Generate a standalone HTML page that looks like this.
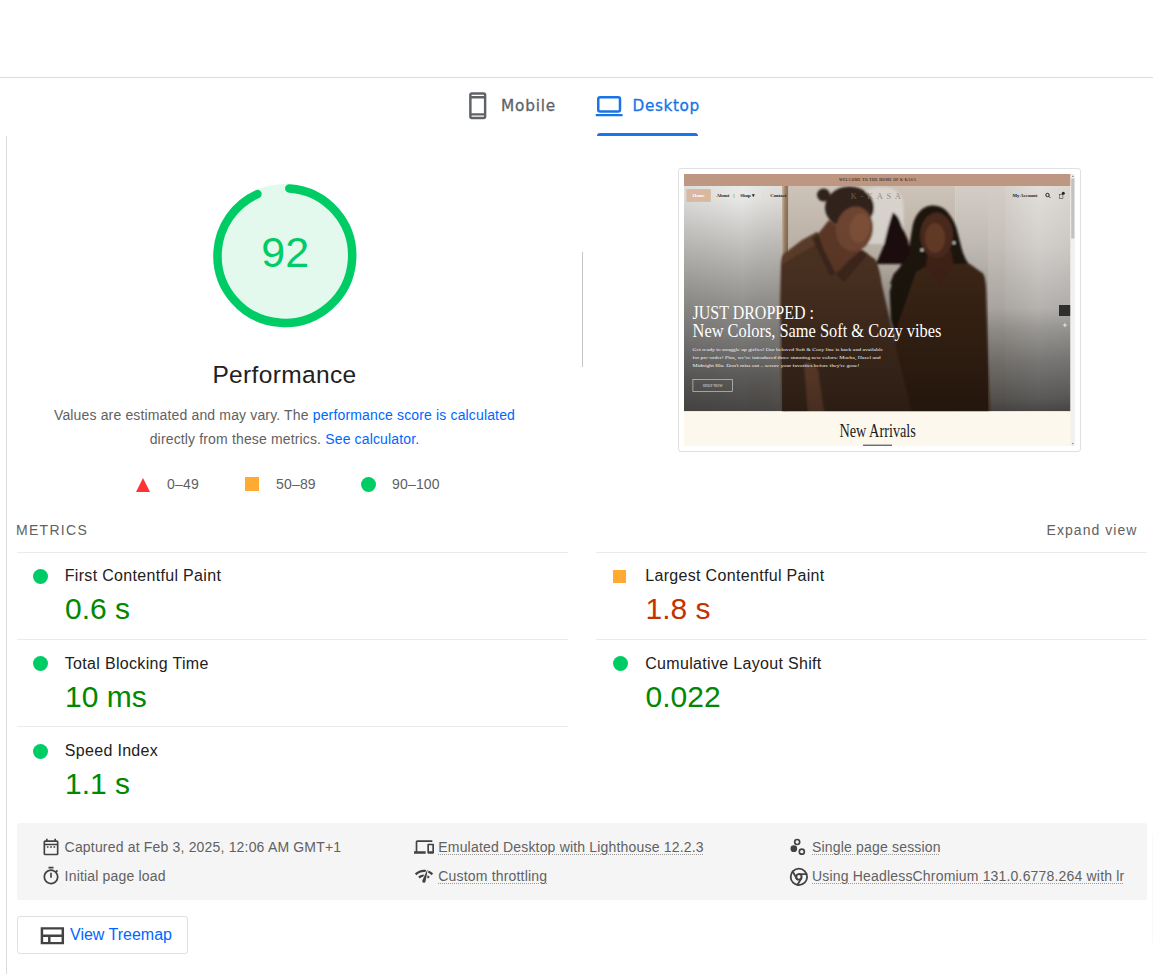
<!DOCTYPE html>
<html><head><meta charset="utf-8">
<style>
*{box-sizing:border-box;margin:0;padding:0}
html,body{width:1153px;height:974px;background:#fff;overflow:hidden}
body{font-family:"Liberation Sans",Arial,sans-serif;color:#212121;position:relative}
.abs{position:absolute}
.hline{position:absolute;left:0;top:77px;width:1153px;height:1px;background:#dadce0}
.vline{position:absolute;left:6px;top:136px;width:1px;height:840px;background:#dadce0}
.tab{position:absolute;top:94px;font-family:"DejaVu Sans","Liberation Sans",sans-serif;font-size:15.3px;line-height:24px;white-space:nowrap;-webkit-text-stroke:.3px currentColor}
.tab.mobile{left:501px;color:#5f6368;letter-spacing:.8px}
.tab.desktop{left:632.5px;color:#1a73e8;letter-spacing:.6px}
.tabline{position:absolute;left:597px;top:133px;width:101px;height:3px;background:#1a73e8;border-radius:3px 3px 0 0}
.gauge{position:absolute;left:204px;top:176px;width:160px;height:160px}
.gtitle{position:absolute;left:0px;width:569px;top:360px;text-align:center;font-size:24.5px;line-height:30px;letter-spacing:.36px;color:#212121}
.desc{position:absolute;left:0;width:569px;top:403px;text-align:center;font-size:14px;line-height:24px;color:#616161;letter-spacing:.15px}
.desc a{color:#06f;text-decoration:none}
.legend{position:absolute;top:472px;font-size:14px;color:#616161;line-height:24px;letter-spacing:.18px}
.mhead{position:absolute;top:518px;font-size:14px;line-height:24px;color:#616161;letter-spacing:1.3px}
.metric{position:absolute;width:551px;height:88px}
.ml{position:absolute;height:1px;background:#ebebeb}
.metric .ic{position:absolute;left:16px;top:15.8px;width:15px;height:15px;border-radius:50%;background:#0c6}
.metric .ic.sq{border-radius:0;background:#fa3;left:17px;top:17.2px;width:13px;height:13px}
.metric .t{position:absolute;left:47.75px;top:11px;font-size:16px;line-height:24px;color:#212121;letter-spacing:.32px;white-space:nowrap}
.metric .v{position:absolute;left:48px;top:38px;font-size:30px;line-height:36px;color:#080;white-space:nowrap}
.metric .v.avg{color:#c33300}
.meta{position:absolute;left:17px;top:823px;width:1130px;height:77px;background:#f5f5f5;border-radius:3px}
.mi{position:absolute;font-size:14px;line-height:20px;color:#616161;white-space:nowrap;letter-spacing:.18px}
.mi svg{position:absolute;left:-24.1px;top:0.4px;width:20px;height:20px;fill:#424242}
.mi u{text-decoration:underline dotted #999 1px;text-underline-offset:2px}
.btn{position:absolute;left:17px;top:916px;width:171px;height:38px;border:1px solid #e0e0e0;border-radius:3px;background:#fff}
.btn span{position:absolute;left:52px;top:8px;font-size:16px;line-height:20px;color:#06f}
.btn svg{position:absolute;left:18.7px;top:3.5px;width:29.5px;height:29.5px;fill:#424242}
.divider{position:absolute;left:581.5px;top:252px;width:1px;height:115px;background:#c6c6c6}
.shot{position:absolute;left:678px;top:168px;width:403px;height:284px;border:1px solid #e0e0e0;border-radius:3px;background:#fff}
</style></head><body>
<div class="hline"></div><div class="vline"></div>
<svg class="abs" style="left:463.15px;top:90.75px" width="29.5" height="29.500" viewBox="0 -960 960 960"><path fill="#5f6368" d="M280-40q-33 0-56.500-23.500T200-120v-720q0-33 23.500-56.500T280-920h400q33 0 56.500 23.500T760-840v720q0 33-23.500 56.500T680-40H280Zm0-120v40h400v-40H280Zm0-80h400v-480H280v480Zm0-560h400v-40H280v40Z"/></svg>
<div class="tab mobile">Mobile</div>
<svg class="abs" style="left:590px;top:90px" width="40" height="32" viewBox="590 90 40 32"><rect x="598.25" y="97.250" width="21.750" height="14.250" rx="1.800" fill="none" stroke="#1a73e8" stroke-width="2.500"/><rect x="595.75" y="114" width="26.850" height="2.250" rx=".6" fill="#1a73e8"/></svg>
<div class="tab desktop">Desktop</div>
<div class="tabline"></div>

<svg class="gauge" viewBox="204 176 160 160">
<circle cx="284.850" cy="255.600" r="67.350" fill="#0c6" stroke="#0c6" stroke-width="8.500" opacity=".1"/>
<circle cx="284.850" cy="255.600" r="67.350" fill="none" stroke="#0c6" stroke-width="8.500" stroke-linecap="round" stroke-dasharray="389.800 423.170" transform="rotate(-86.200 284.850 255.600)"/>
<text x="285.150" y="267.200" text-anchor="middle" font-family="Liberation Sans, sans-serif" font-size="43" fill="#0c6">92</text>
</svg>
<div class="gtitle">Performance</div>
<div class="desc">Values are estimated and may vary. The <a>performance score is calculated</a><br>directly from these metrics. <a>See calculator.</a></div>

<div class="legend" style="left:167px">0–49</div>
<div class="legend" style="left:276px">50–89</div>
<div class="legend" style="left:392px">90–100</div>
<svg class="abs" style="left:136px;top:477px" width="14" height="16"><path d="M7 1L14 15H0z" fill="#f33"/></svg>
<div class="abs" style="left:245px;top:477px;width:14px;height:14px;background:#fa3"></div>
<div class="abs" style="left:361px;top:477px;width:15px;height:15px;background:#0c6;border-radius:50%"></div>

<div class="divider"></div>
<div class="shot"></div>
<!--THUMB--><svg class="abs" style="left:684px;top:174px" width="391" height="272" viewBox="0 0 391 272" font-family="Liberation Serif, serif">
<defs>
<clipPath id="hc"><rect x="0" y="12" width="386.600" height="225.300"/></clipPath>
<linearGradient id="ov" x1="0" y1="0" x2="0" y2="1"><stop offset="0" stop-color="#000" stop-opacity="0"/><stop offset=".26" stop-color="#000" stop-opacity=".07"/><stop offset=".54" stop-color="#000" stop-opacity=".2"/><stop offset=".63" stop-color="#000" stop-opacity=".32"/><stop offset=".78" stop-color="#000" stop-opacity=".47"/><stop offset=".94" stop-color="#000" stop-opacity=".6"/><stop offset="1" stop-color="#000" stop-opacity=".68"/></linearGradient>
<linearGradient id="ov2" x1="0" y1="0" x2="0" y2="1"><stop offset="0" stop-color="#000" stop-opacity="0"/><stop offset=".35" stop-color="#000" stop-opacity=".04"/><stop offset="1" stop-color="#000" stop-opacity=".42"/></linearGradient>
<linearGradient id="lw" x1="0" y1="0" x2="0" y2="1"><stop offset="0" stop-color="#ebebe9"/><stop offset=".06" stop-color="#e6e6e4"/><stop offset=".31" stop-color="#b9b7b4"/><stop offset=".54" stop-color="#8f8d8a"/><stop offset=".67" stop-color="#7b7977"/><stop offset=".86" stop-color="#5a5856"/><stop offset="1" stop-color="#484644"/></linearGradient>
<linearGradient id="lwh" x1="0" y1="0" x2="1" y2="0"><stop offset="0" stop-color="#000" stop-opacity=".06"/><stop offset=".6" stop-color="#000" stop-opacity="0"/><stop offset="1" stop-color="#6b5a48" stop-opacity=".08"/></linearGradient>
<linearGradient id="wd" x1="0" y1="0" x2="1" y2="0"><stop offset="0" stop-color="#cdbba6"/><stop offset=".5" stop-color="#9b7f63"/><stop offset="1" stop-color="#8a7058"/></linearGradient>
<linearGradient id="rw" x1="0" y1="0" x2="1" y2="0"><stop offset="0" stop-color="#d6d1ca"/><stop offset=".5" stop-color="#e2dfdb"/><stop offset="1" stop-color="#dad7d3"/></linearGradient>
<filter id="b1" x="-10%" y="-10%" width="120%" height="120%"><feGaussianBlur stdDeviation="0.900"/></filter>
<filter id="b2" x="-10%" y="-10%" width="120%" height="120%"><feGaussianBlur stdDeviation="2"/></filter>
</defs>
<rect x="0" y="0" width="391" height="272" fill="#fdf8ee"/>
<rect x="0" y="0" width="386.600" height="12" fill="#be9782"/>
<g clip-path="url(#hc)">
 <rect x="0" y="12" width="98" height="225.300" fill="url(#lw)"/><rect x="0" y="12" width="98" height="225.300" fill="url(#lwh)"/>
 <rect x="98" y="12" width="6.500" height="226" fill="url(#wd)"/>
 <rect x="104.500" y="12" width="167" height="226" fill="#cdc3b8"/>
 <rect x="271.300" y="12" width="50" height="226" fill="#d3cdc6"/>
 <rect x="321" y="12" width="66" height="226" fill="url(#rw)"/>
 <rect x="98" y="12" width="288.600" height="225.300" fill="url(#ov)"/>
 <g filter="url(#b1)">
  <!-- mirror arch -->
  <path d="M176 60V30Q176 13 197 13Q219.700 13 219.700 34V56Q220 62 224 66V70H176Z" fill="#dad4ce"/>
  <!-- dark hanging hair -->
  <path d="M208.700 38.500Q214 40 217.700 52L224 66L228 90H192L199.700 72Q204 52 208.700 38.500Z" fill="#1a100c"/>
  <!-- woman 2 hair -->
  <path d="M247.600 31.500Q258 31 263.500 38Q271 47 273.500 58L277.500 74Q280 84 286 92L288 110H206L209.700 100Q220 90 223.600 82L227.600 58Q229 46 233.600 40Q239 32 247.600 31.500Z" fill="#1d120e"/>
  <path d="M224 80Q214 96 209 104L205.700 118L207 146L214 170L226 150L236 100Z" fill="#1d120e"/>
  <!-- woman 2 shirt -->
  <path d="M232 98L246 90H268L285.500 89.800L299.400 99.800Q302.400 106 302.400 125.700L303.400 165.600L306 238H200L214 150Z" fill="#3d2619"/>
  <!-- woman 2 neck + face -->
  <path d="M244 76H267L270 92L256 108L242 92Z" fill="#3f2317"/>
  <ellipse cx="252.600" cy="61.500" rx="16.500" ry="23" fill="#4a291b"/>
  <ellipse cx="251" cy="64" rx="10" ry="15" fill="#774630" opacity=".6"/>
  <circle cx="238" cy="76" r="1.300" fill="#eee"/><circle cx="270" cy="68.800" r="1.300" fill="#eee"/>
  <!-- woman 1 shirt -->
  <path d="M132.900 57.900L150 74L165.800 85.800L177.800 75.800L191.700 85.800Q196 96 197.700 109.700L205.700 145.600L216 190L228 238H98L96 125.700L97 89.800Q97.500 82 100 79.800Z" fill="#4b3123"/>
  <path d="M132.900 57.900L118 66L100 79.800L97 92Q110 82 134 70Z" fill="#5b3d2c"/>
  <!-- woman 1 neck -->
  <path d="M145 46L178 72L174 86L152 100L140 76L133.900 59.900Z" fill="#5c3826"/>
  <path d="M133.900 59.900L140 76L151.800 99.800L146 102L128 64Z" fill="#3e281d"/>
  <path d="M165.800 85.800L177.800 75.800L184 80L160 108L151.800 99.800Z" fill="#3e281d"/>
  <!-- woman 1 face -->
  <ellipse cx="165.500" cy="33.500" rx="24.500" ry="21" fill="#30211a"/>
  <ellipse cx="170.500" cy="55" rx="18.500" ry="22.500" fill="#6e4530" transform="rotate(10 170.500 55)"/>
  <ellipse cx="176" cy="54" rx="10" ry="15" fill="#8a5a3e" opacity=".55" transform="rotate(10 176 54)"/>
  
  <!-- woman 1 hair -->
  
  <circle cx="139.500" cy="21" r="6.500" fill="#30211a"/>
  <!-- woman 1 arm -->
  <path d="M120 190Q128 186 134 196L140 238H124Z" fill="#7a5039"/>
 </g>
 <rect x="98" y="12" width="206" height="225.300" fill="url(#ov2)"/>
 <rect x="375" y="131" width="11.600" height="11" fill="#2f2f2f"/>
 <text x="380.800" y="154" font-size="8" fill="#d8d8d8" text-anchor="middle" font-family="DejaVu Sans, sans-serif">✦</text>
</g>
<!-- scrollbar -->
<rect x="386.600" y="0" width="4.400" height="272" fill="#f1f1f1"/>
<rect x="387.200" y="4.500" width="3.200" height="60" fill="#c1c1c1"/><path d="M387.800 2.800L388.800 1.600L389.800 2.800Z M387.800 269.200L388.800 270.400L389.800 269.200Z" fill="#606060"/>
<!-- banner text -->
<text x="193.600" y="7.400" font-size="3.600" font-weight="bold" fill="#4a3428" text-anchor="middle" letter-spacing=".35">WELCOME TO THE HOME OF K-KASA</text>
<!-- nav -->
<rect x="2.400" y="15.100" width="24.400" height="12.800" fill="#d9b8a0"/>
<g font-size="4.800" font-weight="bold" fill="#1a1a1a">
<text x="14.600" y="23.200" text-anchor="middle" fill="#fff">Home</text>
<text x="32.600" y="23.200">About</text><text x="49.500" y="23.200" font-weight="normal">|</text>
<text x="56.300" y="23.200">Shop ▾</text><text x="78.500" y="23.200" font-weight="normal" fill="#ccc">|</text>
<text x="86.200" y="23.200">Contact</text>
<text x="328.400" y="23.200">My Account</text>
</g>
<text x="193.600" y="24.600" font-size="8.500" fill="#7d736b" fill-opacity=".75" text-anchor="middle" letter-spacing="3.600">K-KASA</text>
<circle cx="363.500" cy="21" r="1.700" fill="none" stroke="#111" stroke-width=".9"/><path d="M364.800 22.300L366.400 23.900" stroke="#111" stroke-width=".9"/>
<rect x="375.300" y="20.500" width="3.600" height="4" fill="none" stroke="#444" stroke-width=".6"/><circle cx="379.300" cy="19.200" r="1.500" fill="#222"/>
<!-- hero text -->
<g fill="#fff">
<text x="8.600" y="144.500" font-size="19.400" textLength="121.300" lengthAdjust="spacingAndGlyphs">JUST DROPPED :</text>
<text x="8.600" y="162.700" font-size="19.400" textLength="248.800" lengthAdjust="spacingAndGlyphs">New Colors, Same Soft &amp; Cozy vibes</text>
<g font-size="5" fill="#f2f2f2">
<text x="8.600" y="177.300" textLength="190.400" lengthAdjust="spacingAndGlyphs">Get ready to snuggle up girlies! Our beloved Soft &amp; Cozy line is back and available</text>
<text x="8.600" y="185.300" textLength="188" lengthAdjust="spacingAndGlyphs">for pre-order! Plus, we've introduced three stunning new colors: Mocha, Hazel and</text>
<text x="8.600" y="193.300" textLength="166.800" lengthAdjust="spacingAndGlyphs">Midnight Blu. Don't miss out – secure your favorites before they're gone!</text>
</g>
</g>
<rect x="8.900" y="205.600" width="39.600" height="11.800" fill="none" stroke="#c8c8c8" stroke-width=".7"/>
<text x="28.700" y="212.900" font-size="3.600" fill="#e0e0e0" text-anchor="middle" letter-spacing=".2">SHOP NOW</text>
<!-- new arrivals -->
<text x="155.400" y="262.900" font-size="18.500" fill="#1a1a1a" textLength="76.500" lengthAdjust="spacingAndGlyphs">New Arrivals</text>
<rect x="179" y="270.700" width="29" height="1" fill="#333"/>
</svg>
<!--/THUMB-->

<div class="mhead" style="left:16px">METRICS</div>
<div class="mhead" style="right:15.500px;letter-spacing:1.05px">Expand view</div>

<div class="ml" style="left:17px;top:552px;width:551px"></div><div class="ml" style="left:596px;top:552px;width:551px"></div>
<div class="ml" style="left:17px;top:639px;width:551px"></div><div class="ml" style="left:596px;top:639px;width:551px"></div>
<div class="ml" style="left:17px;top:726px;width:551px"></div>
<div class="metric" style="left:17px;top:553px"><div class="ic"></div><div class="t">First Contentful Paint</div><div class="v">0.6 s</div></div>
<div class="metric" style="left:597.500px;top:553px"><div class="ic sq" style="left:15.500px"></div><div class="t">Largest Contentful Paint</div><div class="v avg">1.8 s</div></div>
<div class="metric" style="left:17px;top:640.700px"><div class="ic"></div><div class="t">Total Blocking Time</div><div class="v">10 ms</div></div>
<div class="metric" style="left:597.500px;top:640.700px"><div class="ic" style="left:15.500px"></div><div class="t">Cumulative Layout Shift</div><div class="v">0.022</div></div>
<div class="metric" style="left:17px;top:728.200px"><div class="ic"></div><div class="t">Speed Index</div><div class="v">1.1 s</div></div>

<div class="meta"></div>
<div class="mi" style="left:64.600px;top:837px"><svg viewBox="0 0 24 24"><path d="M7 11h2v2H7v-2zm14-5v14a2 2 0 01-2 2H5a2 2 0 01-2-2V6c0-1.100.9-2 2-2h1V2h2v2h8V2h2v2h1a2 2 0 012 2zM5 8h14V6H5v2zm14 12V10H5v10h14zm-4-7h2v-2h-2v2zm-4 0h2v-2h-2v2z"/></svg>Captured at Feb 3, 2025, 12:06 AM GMT+1</div>
<div class="mi" style="left:64.600px;top:866px"><svg viewBox="0 0 24 24"><path d="M15 1H9v2h6V1zm-4 13h2V8h-2v6zm8.100-6.600L20.500 6l-1.400-1.400L17.700 6A9 9 0 0 0 3 13a9 9 0 1 0 16-5.600zM12 20a7 7 0 1 1 0-14 7 7 0 0 1 0 14z"/></svg>Initial page load</div>
<div class="mi" style="left:438.300px;top:837px"><svg viewBox="0 0 24 24"><path d="M4 6h18V4H4a2 2 0 00-2 2v11H0v3h14v-3H4V6zm19 2h-6a1 1 0 00-1 1v10c0 .6.5 1 1 1h6c.6 0 1-.5 1-1V9c0-.6-.5-1-1-1zm-1 9h-4v-7h4v7z"/></svg><u>Emulated Desktop with Lighthouse 12.2.3</u></div>
<div class="mi" style="left:438.300px;top:866px"><svg viewBox="0 0 24 24"><path d="M15.900 5c-.2 0-.3 0-.4.2v.2L10.100 17a2 2 0 0 0-.2 1 2 2 0 0 0 4 .4l2.400-12.900c0-.3-.2-.5-.5-.5zM1 9l2 2c2.900-2.900 6.800-4 10.500-3.600l1.200-2.700C10 3.800 4.700 5.300 1 9zm20 2 2-2a15.400 15.400 0 0 0-5.600-3.600L17 8.200c1.500.7 2.900 1.600 4.100 2.800zm-4 4 2-2a9.900 9.900 0 0 0-2.700-2l-.5 3 1.200 1zM5 13l2 2a7.100 7.100 0 0 1 4-2l1.300-2.900C9.700 10.100 7 11 5 13z"/></svg><u>Custom throttling</u></div>
<div class="mi" style="left:812px;top:837px"><svg viewBox="0 0 24 24"><circle cx="7" cy="14" r="3"/><path d="M7 18a4 4 0 1 1 0-8 4 4 0 0 1 0 8zm0-6a2 2 0 1 0 0 4 2 2 0 0 0 0-4zm4-2a4 4 0 1 1 0-8 4 4 0 0 1 0 8zm0-6a2 2 0 1 0 0 4 2 2 0 0 0 0-4zm5.600 17.600a4 4 0 1 1 0-8 4 4 0 0 1 0 8zm0-6a2 2 0 1 0 0 4 2 2 0 0 0 0-4z"/></svg><u>Single page session</u></div>
<div class="mi" style="left:812px;top:866px"><svg viewBox="-50 -50 562 562"><path d="M256 25.600v25.600a204 204 0 0 1 144.800 60 204 204 0 0 1 60 144.800 204 204 0 0 1-60 144.800 204 204 0 0 1-144.800 60 204 204 0 0 1-144.800-60 204 204 0 0 1-60-144.800 204 204 0 0 1 60-144.800 204 204 0 0 1 144.800-60V0a256 256 0 1 0 0 512 256 256 0 0 0 0-512v25.600z"/><path d="M256 179.200v25.600a51.300 51.300 0 0 1 0 102.400 51.300 51.300 0 0 1 0-102.400v-51.200a102.300 102.300 0 1 0-.1 204.700 102.300 102.300 0 0 0 .1-204.700v25.600z"/><path d="M256 204.800h217.600a25.600 25.600 0 0 0 0-51.200H256a25.600 25.600 0 0 0 0 51.200m44.300 76.800L191.500 470.100a25.600 25.600 0 1 0 44.400 25.600l108.800-188.500a25.600 25.600 0 1 0-44.400-25.600m-88.600 0L102.900 93.200a25.700 25.700 0 0 0-35-9.400 25.700 25.700 0 0 0-9.400 35l108.800 188.400a25.700 25.700 0 0 0 35 9.400 25.900 25.900 0 0 0 9.400-35.100"/></svg><u>Using HeadlessChromium 131.0.6778.264 with lr</u></div>

<div class="abs" style="left:1152px;top:834px;width:1px;height:109px;background:#f9f9f9"></div>
<div class="btn"><svg viewBox="0 0 24 24"><path d="M3 5v14h19V5H3zm2 2h15v4H5V7zm0 10v-4h4v4H5zm6 0v-4h9v4h-9z"/></svg><span>View Treemap</span></div>
</body></html>
